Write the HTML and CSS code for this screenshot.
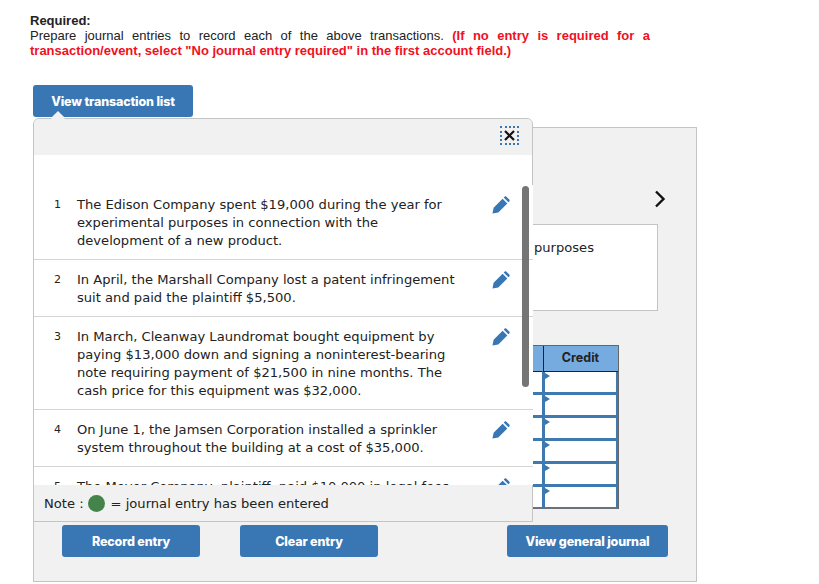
FILE: index.html
```html
<!DOCTYPE html>
<html lang="en">
<head>
    <meta charset="UTF-8">
    <title>Journal entry worksheet</title>
    <link rel="stylesheet" href="styles.css">
</head>
<body>
    <section class="required">
        <h4>Required:</h4>
        <p>Prepare journal entries to record each of the above transactions. <strong>(If no entry is required for a transaction/event, select "No journal entry required" in the first account field.)</strong></p>
    </section>

    <button class="btn btn-list">View transaction list</button>

    <div class="panel">
        <div class="next-row">
            <svg class="next" width="12" height="18" viewBox="0 0 12 18"><path d="M2 1.500l7.500 7.500-7.500 7.500" fill="none" stroke="#111" stroke-width="2.400"/></svg>
        </div>
        <div class="desc">purposes</div>

        <div class="journal">
            <div class="head">&nbsp;</div>
            <div class="head">Credit</div>
            <div class="cell"></div><div class="cell"></div>
            <div class="cell"></div><div class="cell"></div>
            <div class="cell"></div><div class="cell"></div>
            <div class="cell"></div><div class="cell"></div>
            <div class="cell"></div><div class="cell"></div>
            <div class="cell"></div><div class="cell"></div>
        </div>

        <div class="actions">
            <button class="btn btn-action">Record entry</button>
            <button class="btn btn-action">Clear entry</button>
            <button class="btn btn-journal">View general journal</button>
        </div>

        <!-- popup over the worksheet -->
        <div class="popup">
            <div class="popup-head">
                <span class="close">
                    <svg width="13" height="13" viewBox="0 0 13 13"><path d="M2 2l9 9M11 2l-9 9" stroke="#111" stroke-width="2.200"/></svg>
                </span>
            </div>
            <div class="list">
                <div class="list-top"></div>
                <div class="scroll-thumb"></div>

                <div class="item">
                    <span class="num">1</span>
                    <p>The Edison Company spent $19,000 during the year for experimental purposes in connection with the development of a new product.</p>
                    <svg class="pencil" viewBox="0 0 20 20"><path d="M0.500 19.500l1.300-6.500 10-10 5.200 5.200-10 10zM13 1.800l1-1c0.600-0.600 1.400-0.600 2 0l3.200 3.200c0.600 0.600 0.600 1.400 0 2l-1 1z"/></svg>
                </div>
                <div class="item">
                    <span class="num">2</span>
                    <p>In April, the Marshall Company lost a patent infringement suit and paid the plaintiff $5,500.</p>
                    <svg class="pencil" viewBox="0 0 20 20"><path d="M0.500 19.500l1.300-6.500 10-10 5.200 5.200-10 10zM13 1.800l1-1c0.600-0.600 1.400-0.600 2 0l3.200 3.200c0.600 0.600 0.600 1.400 0 2l-1 1z"/></svg>
                </div>
                <div class="item">
                    <span class="num">3</span>
                    <p>In March, Cleanway Laundromat bought equipment by paying $13,000 down and signing a noninterest-bearing note requiring payment of $21,500 in nine months. The cash price for this equipment was $32,000.</p>
                    <svg class="pencil" viewBox="0 0 20 20"><path d="M0.500 19.500l1.300-6.500 10-10 5.200 5.200-10 10zM13 1.800l1-1c0.600-0.600 1.400-0.600 2 0l3.200 3.200c0.600 0.600 0.600 1.400 0 2l-1 1z"/></svg>
                </div>
                <div class="item">
                    <span class="num">4</span>
                    <p>On June 1, the Jamsen Corporation installed a sprinkler system throughout the building at a cost of $35,000.</p>
                    <svg class="pencil" viewBox="0 0 20 20"><path d="M0.500 19.500l1.300-6.500 10-10 5.200 5.200-10 10zM13 1.800l1-1c0.600-0.600 1.400-0.600 2 0l3.200 3.200c0.600 0.600 0.600 1.400 0 2l-1 1z"/></svg>
                </div>
                <div class="item">
                    <span class="num">5</span>
                    <p>The Meyer Company, plaintiff, paid $10,000 in legal fees in connection with a lawsuit.</p>
                    <svg class="pencil" viewBox="0 0 20 20"><path d="M0.500 19.500l1.300-6.500 10-10 5.200 5.200-10 10zM13 1.800l1-1c0.600-0.600 1.400-0.600 2 0l3.200 3.200c0.600 0.600 0.600 1.400 0 2l-1 1z"/></svg>
                </div>
            </div>
            <div class="note">Note : <span class="dot"></span> = journal entry has been entered</div>
        </div>
    </div>
</body>
</html>
```

FILE: styles.css
```css
* {
    box-sizing: border-box;
}
:root {
    --blue: #3876b4;
    --line: #c4c4c4;
    --grey: #f1f1f1;
    --rule: #3f79b2;
}
body {
    margin: 0;
    padding: 13px 0 0 30px;
    background: white;
    font-family: "DejaVu Sans", sans-serif;
    font-size: 13.100px;
    color: #222;
}
.required {
    width: 620px;
    font-family: "Liberation Sans", Arial, sans-serif;
    font-size: 13px;
    line-height: 15px;
}
.required h4 {
    margin: 0;
    font-size: 13px;
}
.required p {
    margin: 0;
    text-align: justify;
}
.required strong {
    color: #f0101e;
}
.btn {
    display: block;
    border: 0;
    border-radius: 3px;
    background: var(--blue);
    color: white;
    font-family: Inter, sans-serif;
    font-size: 12.500px;
    font-weight: 800;
    letter-spacing: -0.150px;
    height: 32px;
    padding: 0;
}
.btn-list {
    width: 160px;
    margin: 27px 0 10px 3px;
}
.panel {
    position: relative;
    width: 664px;
    height: 455px;
    margin-left: 3px;
    border: 1px solid var(--line);
    background: var(--grey);
}
.next-row {
    display: flex;
    justify-content: flex-end;
    padding: 62px 30px 0 0;
}
.desc {
    display: flex;
    justify-content: flex-end;
    width: 400px;
    height: 87px;
    margin: 16px 0 0 224px;
    padding: 15px 63px 0 0;
    border: 1px solid var(--line);
    background: white;
}
.journal {
    display: grid;
    grid-template-columns: 73px 76px;
    grid-template-rows: 26px repeat(5, 23px) 22px;
    width: 150px;
    margin: 34px 0 0 435px;
    border-top: 1px solid #666;
    border-right: 1px solid #666;
}
.head {
    background: #76abe0;
    border-bottom: 1px solid #222;
    line-height: 24px;
    text-align: center;
    font-family: Inter, sans-serif;
    font-weight: 700;
    font-size: 12.500px;
    color: #222;
}
.head:nth-child(2) {
    border-left: 1px solid #76abe0;
    box-shadow: inset 1px 0 0 #222;
}
.cell {
    position: relative;
    background: white;
    border-bottom: 3px solid var(--rule);
}
.cell:nth-child(even) {
    border-left: 3px solid var(--rule);
    border-right: 2px solid var(--rule);
}
.cell:nth-child(even)::before {
    content: "";
    position: absolute;
    left: 0;
    top: 1px;
    border-left: 5px solid var(--blue);
    border-top: 3px solid transparent;
    border-bottom: 3px solid transparent;
}
.cell:nth-last-child(-n+2) {
    border-bottom: 2px solid #6b7178;
}
.actions {
    display: flex;
    margin: 16px 0 0 28px;
}
.btn-action {
    width: 138px;
    margin-right: 40px;
}
.btn-journal {
    width: 161px;
    margin-left: 89px;
    white-space: nowrap;
}

/* popup */
.popup {
    position: absolute;
    left: -1px;
    top: -10px;
    display: flex;
    flex-direction: column;
    width: 500px;
    height: 404px;
    border: 1px solid var(--line);
    border-radius: 6px 6px 0 0;
    background: white;
}
.popup::before {
    content: "";
    position: absolute;
    left: 19px;
    top: -6px;
    width: 10px;
    height: 10px;
    background: var(--grey);
    transform: rotate(45deg);
}
.popup-head {
    display: flex;
    justify-content: flex-end;
    align-items: flex-start;
    flex: none;
    height: 36px;
    padding: 7px 13px 0 0;
    background: var(--grey);
    border-radius: 6px 6px 0 0;
}
.close {
    display: flex;
    align-items: center;
    justify-content: center;
    width: 19px;
    height: 19px;
    border: 2px dotted var(--blue);
}
.list {
    position: relative;
    flex: 1;
    min-height: 0;
    margin-right: -1px;
    overflow: hidden;
    background: white;
}
.list-top {
    height: 30px;
    border-right: 1px solid var(--line);
}
.scroll-thumb {
    position: absolute;
    top: 31px;
    right: 4px;
    width: 7px;
    height: 201px;
    border-radius: 4px;
    background: #757575;
}
.item {
    display: flex;
    align-items: flex-start;
    padding: 11px 0 9px 20px;
    border-bottom: 1px solid #d4d4d4;
    line-height: 18px;
}
.num {
    flex: none;
    width: 23px;
    font-size: 11px;
}
.item p {
    flex: none;
    width: 385px;
    margin: 0;
}
.pencil {
    flex: none;
    width: 18px;
    height: 18px;
    margin-left: 30px;
    fill: var(--blue);
}
.note {
    flex: none;
    display: flex;
    align-items: center;
    gap: 5px;
    height: 36px;
    padding-left: 10px;
    background: var(--grey);
}
.dot {
    width: 17px;
    height: 17px;
    margin: 0 1px 0 -1px;
    border-radius: 50%;
    background: #44834a;
}
```
